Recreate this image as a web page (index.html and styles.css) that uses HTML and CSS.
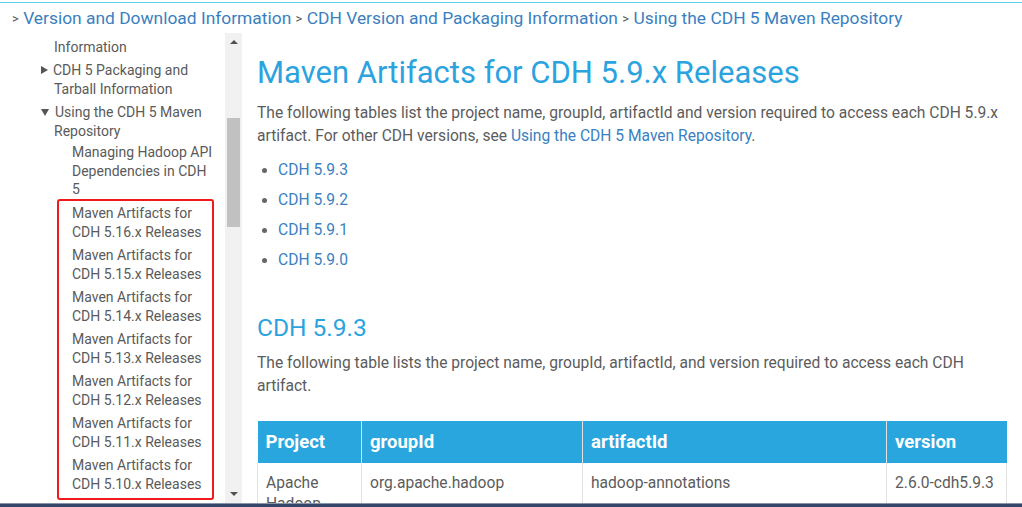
FILE: index.html
```html
<!DOCTYPE html>
<html>
<head>
<meta charset="utf-8">
<link rel="stylesheet" href="styles.css">
</head>
<body>
<div class="page">
  <header class="crumbs">
    <span class="sep">&gt;</span> <a>Version and Download Information</a>
    <span class="sep">&gt;</span> <a>CDH Version and Packaging Information</a>
    <span class="sep">&gt;</span> <a>Using the CDH 5 Maven Repository</a>
  </header>
  <div class="layout">
    <aside class="sidebar">
      <nav class="toc">
        <div class="item lvl1">Information</div>
        <div class="item lvl1"><span class="tri right"></span>CDH 5 Packaging and<br>Tarball Information</div>
        <div class="item lvl1"><span class="tri down"></span>Using the CDH 5 Maven<br>Repository</div>
        <div class="item lvl2 first">Managing Hadoop API<br>Dependencies in CDH<br>5</div>
        <div class="boxed">
          <div class="item">Maven Artifacts for<br>CDH 5.16.x Releases</div>
          <div class="item">Maven Artifacts for<br>CDH 5.15.x Releases</div>
          <div class="item">Maven Artifacts for<br>CDH 5.14.x Releases</div>
          <div class="item">Maven Artifacts for<br>CDH 5.13.x Releases</div>
          <div class="item">Maven Artifacts for<br>CDH 5.12.x Releases</div>
          <div class="item">Maven Artifacts for<br>CDH 5.11.x Releases</div>
          <div class="item">Maven Artifacts for<br>CDH 5.10.x Releases</div>
        </div>
        <div class="item lvl2 after">Maven Artifacts for<br>CDH 5.9.x Releases</div>
      </nav>
      <div class="scrollbar">
        <span class="arrow up"></span>
        <div class="track"><div class="thumb"></div></div>
        <span class="arrow dn"></span>
      </div>
    </aside>
    <main class="content">
      <h1>Maven Artifacts for CDH 5.9.x Releases</h1>
      <p>The following tables list the project name, groupId, artifactId and version required to access each CDH 5.9.x artifact. For other CDH versions, see <a>Using the CDH 5 Maven Repository</a>.</p>
      <ul class="versions">
        <li><a>CDH 5.9.3</a></li>
        <li><a>CDH 5.9.2</a></li>
        <li><a>CDH 5.9.1</a></li>
        <li><a>CDH 5.9.0</a></li>
      </ul>
      <h2>CDH 5.9.3</h2>
      <p>The following table lists the project name, groupId, artifactId, and version required to access each CDH artifact.</p>
      <table class="artifacts">
        <colgroup>
          <col class="c1"><col class="c2"><col class="c3"><col class="c4">
        </colgroup>
        <thead>
          <tr><th>Project</th><th>groupId</th><th>artifactId</th><th>version</th></tr>
        </thead>
        <tbody>
          <tr><td>Apache Hadoop</td><td>org.apache.hadoop</td><td>hadoop-annotations</td><td>2.6.0-cdh5.9.3</td></tr>
        </tbody>
      </table>
    </main>
  </div>
  <div class="taskbar"></div>
</div>
</body>
</html>
```
FILE: styles.css
```css
html, body {
  margin: 0;
  padding: 0;
  background: #fff;
  overflow: hidden;
}
.page {
  width: 1022px;
  height: 507px;
  display: flex;
  flex-direction: column;
  font-family: Roboto, "Liberation Sans", sans-serif;
  color: #5c5c5c;
}
a { color: #3a7fc1; text-decoration: none; }

.crumbs {
  margin-top: 2px;
  border-top: 1px solid #5fd2ea;
  height: 31px;
  box-sizing: border-box;
  padding: 4px 0 0 12px;
  font-size: 17.4px;
  line-height: 22px;
  white-space: nowrap;
  color: #3a7fc1;
}
.crumbs .sep {
  color: #555;
  font-size: 13px;
  position: relative;
  top: -1px;
}

.layout {
  flex: 1;
  display: flex;
  min-height: 0;
}

.sidebar {
  width: 242px;
  flex: none;
  display: flex;
  overflow: hidden;
}
.toc {
  width: 225px;
  flex: none;
  padding-top: 5px;
  font-size: 14px;
  line-height: 19px;
  color: #5a5a5a;
  overflow: hidden;
}
.item { margin-bottom: 4px; }
.lvl1 { padding-left: 54px; }
.lvl2 { padding-left: 72px; }
.lvl2.first { margin-top: -2px; margin-bottom: 0; line-height: 18.5px; }
.tri {
  display: inline-block;
  width: 0;
  height: 0;
  margin-left: -13px;
  margin-right: 5px;
  vertical-align: 1px;
}
.tri.right {
  border-top: 4px solid transparent;
  border-bottom: 4px solid transparent;
  border-left: 7px solid #555;
}
.tri.down {
  border-left: 4px solid transparent;
  border-right: 4px solid transparent;
  border-top: 7px solid #555;
  margin-left: -13px;
  margin-right: 6px;
}
.boxed {
  margin-left: 57px;
  width: 157px;
  box-sizing: border-box;
  border: 2px solid #f01a1a;
  border-radius: 3px;
  padding: 3px 0 0 13px;
}
.boxed .item { white-space: nowrap; }
.after { margin-top: 5px; }

.scrollbar {
  width: 17px;
  flex: none;
  background: #f1f1f1;
  display: flex;
  flex-direction: column;
  align-items: center;
  padding-bottom: 4px;
}
.arrow {
  width: 0;
  height: 0;
  border-left: 4px solid transparent;
  border-right: 4px solid transparent;
  flex: none;
}
.arrow.up { border-bottom: 4px solid #505050; margin: 7px 0 5px; }
.arrow.dn { border-top: 4px solid #505050; margin: 5px 0 3px; }
.track {
  flex: 1;
  width: 13px;
  padding-top: 69px;
}
.thumb {
  height: 109px;
  background: #c1c1c1;
}

.content {
  flex: 1;
  padding: 22px 0 0 15px;
  overflow: hidden;
}
.content h1 {
  margin: 0;
  font-size: 31px;
  line-height: 36px;
  font-weight: 400;
  color: #2ba3df;
  white-space: nowrap;
}
.content p {
  margin: 11px 0 0;
  width: 750px;
  font-size: 15.6px;
  line-height: 23px;
}
.versions {
  margin: 11px 0 0;
  padding-left: 21px;
  font-size: 15.6px;
  line-height: 23px;
  color: #666;
}
.versions li { margin-bottom: 7px; }
.content h2 {
  margin: 41px 0 0;
  font-size: 24.5px;
  line-height: 30px;
  font-weight: 400;
  color: #2ba3df;
}
.content h2 + p { margin-top: 9px; }

.artifacts {
  margin-top: 23px;
  border-collapse: collapse;
  font-size: 15.6px;
  table-layout: fixed;
  width: 749px;
}
.c1 { width: 104px; }
.c2 { width: 221px; }
.c3 { width: 304px; }
.c4 { width: 120px; }
.artifacts th {
  background: #2aa6de;
  color: #fff;
  text-align: left;
  font-weight: 700;
  font-size: 18.5px;
  height: 42px;
  padding: 0 8px;
  border-left: 1px solid #e2e2e2;
}
.artifacts th:first-child { border-left: none; }
.artifacts td {
  vertical-align: top;
  padding: 10px 8px 0;
  line-height: 21px;
  border: 1px solid #e2e2e2;
  border-top: none;
  color: #5c5c5c;
}

.taskbar {
  height: 3px;
  flex: none;
  background: #34466a;
  border-top: 1px solid #8a94a8;
}
```
